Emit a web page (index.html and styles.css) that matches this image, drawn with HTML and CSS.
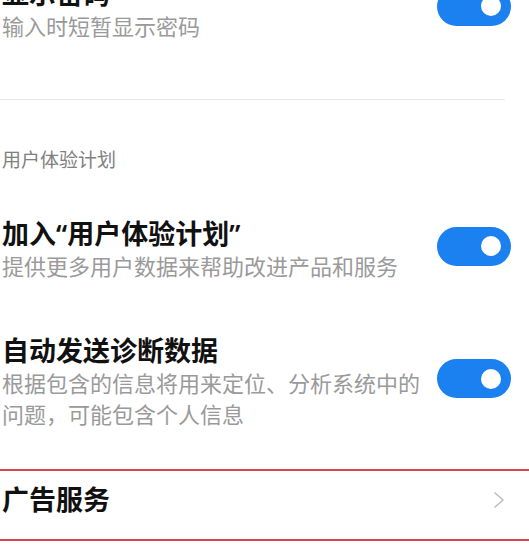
FILE: index.html
```html
<!DOCTYPE html>
<html lang="zh-CN">
<head>
    <meta charset="UTF-8">
    <meta name="viewport" content="width=device-width, initial-scale=1.0">
    <title>隐私设置</title>
    <link rel="stylesheet" href="styles.css">
</head>
<body>
  <div class="screen">
    <div class="settings">
      <div class="setting-item first">
        <div class="setting-text">
          <div class="setting-title">显示密码</div>
          <div class="setting-desc">输入时短暂显示密码</div>
        </div>
        <span class="switch"><span class="knob"></span></span>
      </div>

      <div class="divider"></div>

      <div class="group-title">用户体验计划</div>

      <div class="setting-item">
        <div class="setting-text">
          <div class="setting-title">加入“用户体验计划”</div>
          <div class="setting-desc">提供更多用户数据来帮助改进产品和服务</div>
        </div>
        <span class="switch"><span class="knob"></span></span>
      </div>

      <div class="setting-item">
        <div class="setting-text">
          <div class="setting-title">自动发送诊断数据</div>
          <div class="setting-desc">根据包含的信息将用来定位、分析系统中的问题，可能包含个人信息</div>
        </div>
        <span class="switch"><span class="knob"></span></span>
      </div>

      <div class="link-row">
        <div class="setting-title">广告服务</div>
        <svg class="chevron" width="12" height="18" viewBox="0 0 12 18">
          <path d="M1.5 1.5 L10 9 L1.5 16.5" fill="none" stroke="#bdbdbd" stroke-width="1.6" stroke-linejoin="round"/>
        </svg>
      </div>
    </div>
  </div>
</body>
</html>
```

FILE: styles.css
```css
* {
    margin: 0;
    padding: 0;
    box-sizing: border-box;
}

body {
    background: #fff;
    font-family: "Noto Sans", "Noto Sans CJK SC", sans-serif;
    color: #111;
}

/* the screenshot starts part-way down the list, so the first row is cut */
.screen {
    height: 549px;
    overflow: hidden;
}

.settings {
    padding: 0 18px 0 2px;
    margin-top: -49px;
}

.setting-item {
    display: flex;
    align-items: center;
    gap: 12px;
    padding: 26px 0;
}

.setting-item.first {
    padding-bottom: 57px;
}

.setting-text {
    flex: 1;
}

.setting-title {
    font-size: 27px;
    line-height: 34px;
    font-weight: 600;
    color: #111;
}

.setting-desc {
    font-size: 22px;
    line-height: 31px;
    color: #9a9a9a;
}

.switch {
    position: relative;
    flex-shrink: 0;
    width: 74px;
    height: 39px;
    border-radius: 20px;
    background: #1b80f0;
    margin-bottom: 7px;
}

.knob {
    position: absolute;
    top: 9.5px;
    right: 10px;
    width: 20px;
    height: 20px;
    border-radius: 50%;
    background: #fff;
}

.divider {
    height: 1px;
    background: #e6e6e6;
    margin-right: 6px;
    margin-left: -2px;
}

.group-title {
    font-size: 19px;
    line-height: 26px;
    color: #808080;
    margin-top: 47px;
    margin-bottom: 18px;
}

.link-row {
    display: flex;
    align-items: center;
    justify-content: space-between;
    margin-top: 13px;
    margin-left: -2px;
    margin-right: -18px;
    padding: 12px 24px 22px 2px;
    border-top: 2px solid #d8464b;
    border-bottom: 2px solid #d8464b;
}
```
